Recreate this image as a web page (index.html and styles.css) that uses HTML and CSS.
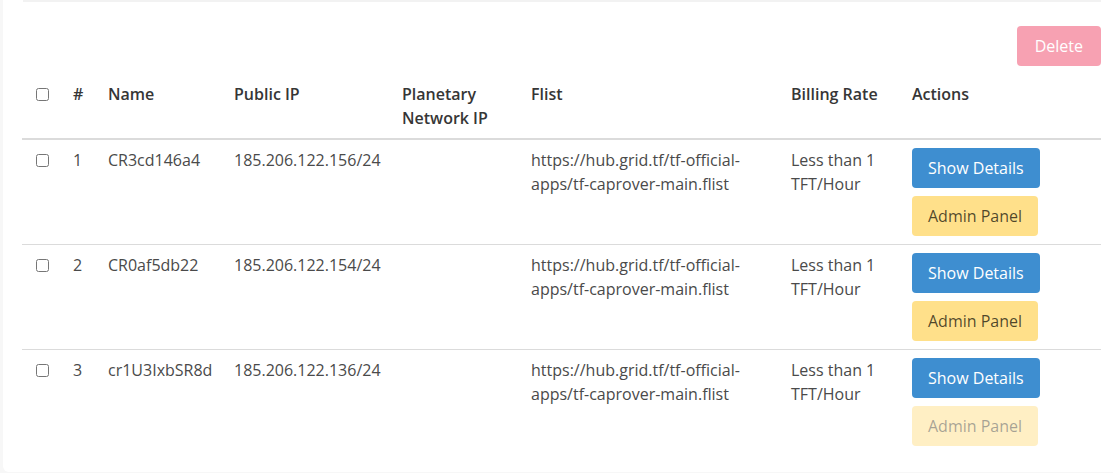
FILE: index.html
```html
<!DOCTYPE html>
<html lang="en">
<head>
<meta charset="utf-8">
<title>Deployments</title>
<link rel="stylesheet" href="styles.css">
</head>
<body>
<div class="card">
  <div class="tabline"></div>
  <div class="toolbar">
    <button class="btn btn-danger btn-wide" disabled>Delete</button>
  </div>
  <table class="table">
    <colgroup>
      <col class="c-check"><col class="c-num"><col class="c-name"><col class="c-pip">
      <col class="c-net"><col class="c-flist"><col class="c-bill"><col class="c-act">
    </colgroup>
    <thead>
      <tr>
        <th><input type="checkbox" class="check"></th>
        <th>#</th>
        <th>Name</th>
        <th>Public IP</th>
        <th>Planetary Network IP</th>
        <th>Flist</th>
        <th>Billing Rate</th>
        <th>Actions</th>
      </tr>
    </thead>
    <tbody>
      <tr>
        <td><input type="checkbox" class="check"></td>
        <td>1</td>
        <td>CR3cd146a4</td>
        <td>185.206.122.156/24</td>
        <td></td>
        <td>https://hub.grid.tf/tf-official-apps/tf-caprover-main.flist</td>
        <td>Less than 1 TFT/Hour</td>
        <td><div class="buttons"><button class="btn btn-info">Show Details</button><button class="btn btn-warning">Admin Panel</button></div></td>
      </tr>
      <tr>
        <td><input type="checkbox" class="check"></td>
        <td>2</td>
        <td>CR0af5db22</td>
        <td>185.206.122.154/24</td>
        <td></td>
        <td>https://hub.grid.tf/tf-official-apps/tf-caprover-main.flist</td>
        <td>Less than 1 TFT/Hour</td>
        <td><div class="buttons"><button class="btn btn-info">Show Details</button><button class="btn btn-warning">Admin Panel</button></div></td>
      </tr>
      <tr>
        <td><input type="checkbox" class="check"></td>
        <td>3</td>
        <td>cr1U3IxbSR8d</td>
        <td>185.206.122.136/24</td>
        <td></td>
        <td>https://hub.grid.tf/tf-official-apps/tf-caprover-main.flist</td>
        <td>Less than 1 TFT/Hour</td>
        <td><div class="buttons"><button class="btn btn-info">Show Details</button><button class="btn btn-warning" disabled>Admin Panel</button></div></td>
      </tr>
    </tbody>
  </table>
</div>
</body>
</html>
```

FILE: styles.css
```css
* { box-sizing: border-box; }
html, body { margin: 0; padding: 0; }
body {
  background: #f7f7f7;
  font-family: "Open Sans", "Noto Sans", sans-serif;
  font-size: 16px;
  color: #4a4a4a;
  height: 473px;
  overflow: hidden;
}
.card {
  margin-left: 3px;
  width: 1110px;
  background: #ffffff;
  border-radius: 0 0 0 6px;
  padding: 0 12px 18px 19px;
}
.tabline {
  height: 2px;
  background: #f2f2f2;
  margin-left: 1px;
}
.toolbar {
  display: flex;
  justify-content: flex-end;
  padding-top: 24px;
  margin-bottom: 8px;
}
.btn {
  font-family: inherit;
  font-size: 16px;
  line-height: 1.5;
  height: 40px;
  padding: 7px 15px;
  border: 1px solid transparent;
  border-radius: 4px;
  cursor: pointer;
  white-space: nowrap;
}
.btn-wide { padding: 7px 17px; }
.btn:disabled { opacity: 0.5; cursor: not-allowed; }
.btn-danger { background: #f14668; color: #ffffff; }
.btn-info { background: #3e8ed0; color: #ffffff; }
.btn-warning { background: #ffe08a; color: rgba(0, 0, 0, 0.7); }
.table {
  width: 1079px;
  table-layout: fixed;
  border-collapse: collapse;
}
.c-check { width: 39px; }
.c-num { width: 35px; }
.c-name { width: 126px; }
.c-pip { width: 168px; }
.c-net { width: 129px; }
.c-flist { width: 260px; }
.c-bill { width: 121px; }
.c-act { width: 201px; }
.table th, .table td {
  text-align: left;
  vertical-align: top;
  padding: 8px 12px;
  line-height: 24px;
  border-bottom: 1px solid #dbdbdb;
}
.table th {
  color: #363636;
  font-weight: 600;
  border-bottom-width: 2px;
}
.table tbody tr:last-child td { border-bottom: 0; }
.check {
  width: 13px;
  height: 13px;
  margin: 0 0 0 2px;
  vertical-align: middle;
  position: relative;
  top: -1px;
}
.buttons {
  display: flex;
  flex-direction: column;
  align-items: flex-start;
  gap: 8px;
}
```
